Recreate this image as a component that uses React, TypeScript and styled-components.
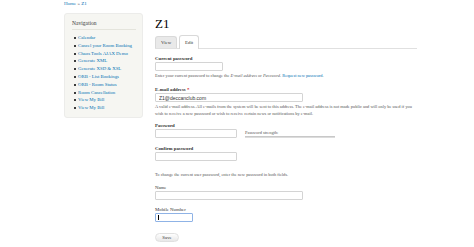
import React from 'react';
import styled, { createGlobalStyle } from 'styled-components';

const GlobalStyle = createGlobalStyle`
  html, body {
    margin: 0;
    padding: 0;
    background: #fff;
    font-family: "Liberation Serif", "Times New Roman", serif;
    color: #3b3b3b;
  }
`;

const Page = styled.div`
  width: 474px;
  height: 247px;
  padding-left: 64px;
  box-sizing: border-box;
  overflow: hidden;
`;

const Breadcrumb = styled.div`
  height: 13px;
  padding-top: 1px;
  box-sizing: border-box;
  font-size: 5px;
  line-height: 6px;
  color: #3b3b3b;
  a {
    color: #0071b3;
    text-decoration: none;
  }
`;

const Columns = styled.div`
  display: flex;
  gap: 12px;
  align-items: flex-start;
`;

const Sidebar = styled.aside`
  width: 79px;
  box-sizing: border-box;
  background: #f6f6f2;
  border: 1px solid #ececea;
  border-radius: 3px;
  padding: 6px 6px 5px 7px;
`;

const NavTitle = styled.h2`
  margin: 0 0 4px;
  font-size: 5.5px;
  font-weight: normal;
  line-height: 7px;
  color: #3b3b3b;
  padding-bottom: 2px;
  border-bottom: 1px solid #e4e4dc;
`;

const NavList = styled.ul`
  margin: 0;
  padding: 0 0 0 6px;
  list-style: none;
`;

const NavItem = styled.li`
  position: relative;
  font-size: 4.8px;
  line-height: 7.8px;
  white-space: nowrap;
  a {
    color: #0071b3;
    text-decoration: none;
  }
  &::before {
    content: '';
    position: absolute;
    left: -4px;
    top: 3px;
    width: 2px;
    height: 2px;
    background: #3b3b3b;
  }
`;

const Main = styled.main`
  width: 262px;
`;

const Title = styled.h1`
  margin: 4px 0 4px;
  font-size: 13px;
  font-weight: normal;
  line-height: 14px;
  color: #000;
`;

const Tabs = styled.ul`
  display: flex;
  gap: 2px;
  margin: 0 0 7px;
  padding: 0;
  list-style: none;
  border-bottom: 1px solid #e0e0e0;
  align-items: flex-end;
`;

const Tab = styled.li<{ $active?: boolean }>`
  font-size: 4.8px;
  line-height: 5px;
  padding: ${(p) => (p.$active ? '4px 5px 4px' : '3px 5px 3px')};
  border: 1px solid #d9d9d9;
  border-bottom: none;
  border-radius: 3px 3px 0 0;
  background: ${(p) => (p.$active ? '#fff' : '#e9e9e9')};
  color: #333;
  margin-bottom: ${(p) => (p.$active ? '-1px' : '0')};
`;

const Field = styled.div<{ $gap?: number }>`
  margin-bottom: ${(p) => p.$gap ?? 8}px;
`;

const Label = styled.label<{ $plain?: boolean }>`
  display: block;
  font-size: 4.8px;
  line-height: 6px;
  font-weight: ${(p) => (p.$plain ? 'normal' : 'bold')};
  color: #333;
  margin-bottom: 0;
  span {
    color: #c00;
  }
`;

const Input = styled.input<{ $w: number; $focus?: boolean }>`
  display: block;
  width: ${(p) => p.$w}px;
  height: 9px;
  box-sizing: border-box;
  margin: 0;
  padding: 0 3px;
  border: 1px solid ${(p) => (p.$focus ? '#8fb3e6' : '#d4d4d4')};
  border-radius: 1px;
  background: #fff;
  font-family: "Liberation Sans", Arial, sans-serif;
  font-size: 5px;
  color: #333;
  outline: none;
`;

const Description = styled.div`
  font-size: 4.4px;
  line-height: 7px;
  color: #555;
  margin-top: 1px;
  a {
    color: #0071b3;
    text-decoration: none;
  }
`;

const PasswordRow = styled.div`
  display: flex;
  gap: 8px;
  align-items: flex-start;
`;

const Strength = styled.div`
  width: 90px;
  padding-top: 1px;
  font-size: 4.4px;
  line-height: 5px;
  color: #555;
`;

const StrengthBar = styled.div`
  height: 1px;
  margin-top: 1px;
  background: #c8c8c8;
  border-bottom: 1px solid #dcdcdc;
`;

const FocusWrap = styled.div`
  position: relative;
  width: 38px;
  &::after {
    content: '';
    position: absolute;
    left: 3px;
    top: 2px;
    width: 1px;
    height: 5px;
    background: #000;
  }
`;

const SaveButton = styled.button`
  display: block;
  margin-top: 11px;
  width: 24px;
  height: 9px;
  padding: 0;
  border: 1px solid #e0e0e0;
  border-radius: 5px;
  background: linear-gradient(#fefefe, #e8e8e8);
  font-family: "Liberation Serif", serif;
  font-size: 4.8px;
  color: #333;
`;

const navItems = [
  'Calendar',
  'Cancel your Room Booking',
  'Chaos Tools AJAX Demo',
  'Generate XML',
  'Generate XSD & XSL',
  'ORB - List Bookings',
  'ORB - Room Status',
  'Room Cancellation',
  'View My Bill',
  'View My Bill',
];

export default function App() {
  return (
    <Page>
      <GlobalStyle />
      <Breadcrumb>
        <a href="#">Home</a> » <a href="#">Z1</a>
      </Breadcrumb>
      <Columns>
        <Sidebar>
          <NavTitle>Navigation</NavTitle>
          <NavList>
            {navItems.map((item, i) => (
              <NavItem key={i}>
                <a href="#">{item}</a>
              </NavItem>
            ))}
          </NavList>
        </Sidebar>
        <Main>
          <Title>Z1</Title>
          <Tabs>
            <Tab>View</Tab>
            <Tab $active>Edit</Tab>
          </Tabs>

          <Field>
            <Label>Current password</Label>
            <Input $w={68} type="password" />
            <Description>
              Enter your current password to change the <em>E-mail address</em> or <em>Password</em>.{' '}
              <a href="#">Request new password</a>.
            </Description>
          </Field>

          <Field $gap={6}>
            <Label>
              E-mail address <span>*</span>
            </Label>
            <Input $w={148} defaultValue="Z1@deccanclub.com" />
            <Description>
              A valid e-mail address. All e-mails from the system will be sent to this address. The e-mail address is
              not made public and will only be used if you wish to receive a new password or wish to receive certain
              news or notifications by e-mail.
            </Description>
          </Field>

          <Field>
            <Label>Password</Label>
            <PasswordRow>
              <Input $w={82} type="password" />
              <Strength>
                Password strength:
                <StrengthBar />
              </Strength>
            </PasswordRow>
          </Field>

          <Field $gap={10}>
            <Label>Confirm password</Label>
            <Input $w={82} type="password" />
          </Field>

          <Field $gap={7}>
            <Description>To change the current user password, enter the new password in both fields.</Description>
          </Field>

          <Field $gap={7}>
            <Label $plain>Name</Label>
            <Input $w={148} />
          </Field>

          <Field $gap={0}>
            <Label $plain>Mobile Number</Label>
            <FocusWrap>
              <Input $w={38} $focus />
            </FocusWrap>
          </Field>

          <SaveButton>Save</SaveButton>
        </Main>
      </Columns>
    </Page>
  );
}
